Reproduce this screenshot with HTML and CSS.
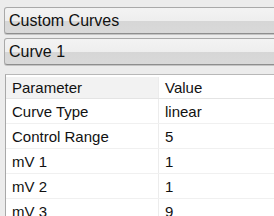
FILE: index.html
```html
<!DOCTYPE html>
<html lang="en">
<head>
    <meta charset="UTF-8">
    <title>Custom Curves</title>
    <link rel="stylesheet" href="styles.css">
</head>
<body>

<div class="selectors">
    <div class="combo">Custom Curves</div>
    <div class="combo">Curve 1</div>
</div>

<!-- Curve parameters -->
<div class="grid">
    <table>
        <tr class="head">
            <th class="col-param">Parameter</th>
            <th>Value</th>
        </tr>
        <tr><td class="col-param">Curve Type</td><td>linear</td></tr>
        <tr><td class="col-param">Control Range</td><td>5</td></tr>
        <tr><td class="col-param">mV 1</td><td>1</td></tr>
        <tr><td class="col-param">mV 2</td><td>1</td></tr>
        <tr><td class="col-param">mV 3</td><td>9</td></tr>
    </table>
</div>

</body>
</html>
```

FILE: styles.css
```css
body {
    font-family: "Liberation Sans", Arial, sans-serif;
    margin: 0;
    background: #ececec;
    color: #111;
    overflow: hidden;
}
.selectors {
    padding: 7px 0 0 4px;
}
.combo {
    height: 25px;
    line-height: 25px;
    margin-bottom: 4px;
    margin-right: -10px;
    padding-left: 4px;
    font-size: 16px;
    border: 1px solid #a9a9a9;
    border-bottom-color: #8e8e8e;
    border-radius: 3px;
    background: linear-gradient(#f3f3f3 0%, #eeeeee 50%, #d6d6d6 51%, #d9d9d9 100%);
    box-shadow: 0 1px 0 #c4c4c4;
}
.grid {
    margin-top: 9px;
    margin-left: 5px;
    border-top: 1px solid #b8b8b8;
    border-left: 1px solid #a8a8a8;
    background: #fff;
    height: 200px;
    padding-top: 2px;
}
table {
    border-collapse: collapse;
    width: 300px;
    font-size: 15px;
}
th, td {
    text-align: left;
    font-weight: normal;
    padding: 0 0 0 6px;
    height: 24px;
    border-bottom: 1px solid #f0f0f0;
}
.head th {
    height: 21px;
    border-bottom: 1px solid #e4e4e4;
}
.head .col-param {
    background: #f2f2f2;
}
.col-param {
    width: 146px;
    border-right: 1px solid #ececec;
}
```
